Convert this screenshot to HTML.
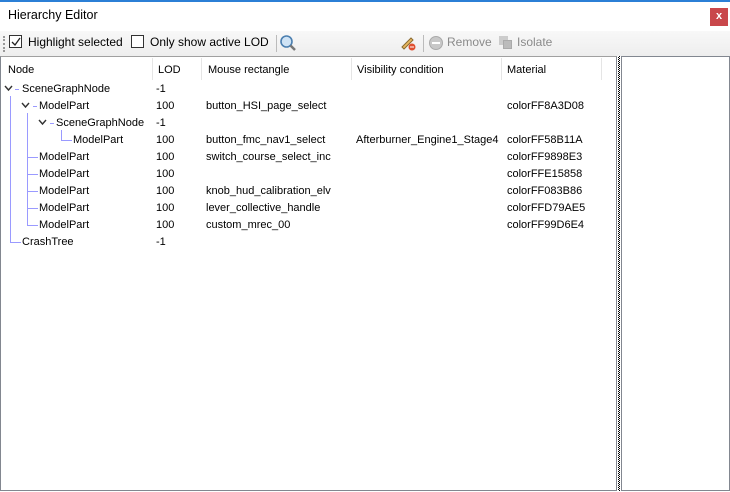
<!DOCTYPE html>
<html><head><style>
*{margin:0;padding:0;box-sizing:border-box}
body{width:730px;height:491px;background:#fff;font-family:"Liberation Sans",sans-serif;font-size:11px;color:#000;position:relative;overflow:hidden}
.a{position:absolute;white-space:nowrap}
.r{position:absolute;left:0;top:0;width:730px;height:491px;transform:translateY(1px)}
.tl{position:absolute;background:#9a9aff}
</style></head><body>
<div class="a" style="left:0;top:0;width:730px;height:2px;background:#2b7fd6"></div>
<div class="a" style="left:8px;top:8px;font-size:12.5px">Hierarchy Editor</div>
<div class="a" style="left:710px;top:8px;width:18px;height:18px;background:#c9474b;color:#fff;font-size:11px;font-weight:bold;text-align:center;line-height:17px">x</div>
<div class="a" style="left:0;top:31px;width:730px;height:25px;background:linear-gradient(#f8f8f8,#eeeeee)"></div>
<div class="a" style="left:3px;top:36px;width:2px;height:16px;border-left:2px dotted #999"></div>
<div class="a" style="left:9px;top:35px;width:13px;height:13px;border:1px solid #333;background:#fff"></div>
<svg class="a" style="left:10px;top:36px" width="12" height="12"><path d="M2 6 L5 9 L10 2" stroke="#222" fill="none" stroke-width="1.3"/></svg>
<div class="a" style="left:28px;top:35px;font-size:12px">Highlight selected</div>
<div class="a" style="left:131px;top:35px;width:13px;height:13px;border:1px solid #333;background:#fff"></div>
<div class="a" style="left:150px;top:35px;font-size:12px">Only show active LOD</div>
<div class="a" style="left:276px;top:35px;width:1px;height:17px;background:#bbb"></div>
<svg class="a" style="left:279px;top:34px" width="18" height="18"><circle cx="7.5" cy="7.5" r="5.5" fill="#cfe3f5" stroke="#4b7fb0" stroke-width="1.6"/><path d="M11.5 11.5 L16 16" stroke="#777" stroke-width="2.5"/></svg>
<svg class="a" style="left:400px;top:35px" width="16" height="16"><path d="M2 12 L11 3 L13 5 L4 14 Z" fill="#e8b860" stroke="#8a6a30"/><circle cx="12" cy="12" r="3.5" fill="#e05030"/><path d="M10 12h4" stroke="#fff"/></svg>
<div class="a" style="left:423px;top:35px;width:1px;height:17px;background:#bbb"></div>
<div class="a" style="left:429px;top:36px;width:14px;height:14px;border-radius:50%;background:#c8c8c8;border:1px solid #aaa"></div>
<div class="a" style="left:432px;top:42px;width:8px;height:2px;background:#fff"></div>
<div class="a" style="left:447px;top:35px;font-size:12px;color:#8a8a8a">Remove</div>
<div class="a" style="left:499px;top:36px;width:9px;height:9px;background:#ccc"></div>
<div class="a" style="left:503px;top:40px;width:9px;height:9px;background:#bbb;border:1px solid #aaa"></div>
<div class="a" style="left:517px;top:35px;font-size:12px;color:#8a8a8a">Isolate</div>
<div class="a" style="left:0;top:56px;width:617px;height:435px;border:1px solid #828790;border-top:1px solid #a0a0a0"></div>
<div class="a" style="left:618px;top:56px;width:2px;height:435px;background:repeating-conic-gradient(#000 0 25%,#fff 0 50%) 0 0/2px 2px"></div>
<div class="a" style="left:621px;top:56px;width:109px;height:435px;border:1px solid #828790"></div>
<div class="a" style="left:152px;top:58px;width:1px;height:22px;background:#e5e5e5"></div>
<div class="a" style="left:201px;top:58px;width:1px;height:22px;background:#e5e5e5"></div>
<div class="a" style="left:351px;top:58px;width:1px;height:22px;background:#e5e5e5"></div>
<div class="a" style="left:501px;top:58px;width:1px;height:22px;background:#e5e5e5"></div>
<div class="a" style="left:601px;top:58px;width:1px;height:22px;background:#e5e5e5"></div>
<div class="r">
<div class="a" style="left:8px;top:63px">Node</div>
<div class="a" style="left:158px;top:63px">LOD</div>
<div class="a" style="left:208px;top:63px">Mouse rectangle</div>
<div class="a" style="left:357px;top:63px">Visibility condition</div>
<div class="a" style="left:507px;top:63px">Material</div>
<div class="tl" style="left:10px;top:95px;width:1px;height:147px"></div>
<div class="tl" style="left:11px;top:241px;width:10px;height:1px"></div>
<div class="tl" style="left:27px;top:112px;width:1px;height:113px"></div>
<div class="tl" style="left:28px;top:156px;width:10px;height:1px"></div>
<div class="tl" style="left:28px;top:173px;width:10px;height:1px"></div>
<div class="tl" style="left:28px;top:190px;width:10px;height:1px"></div>
<div class="tl" style="left:28px;top:207px;width:10px;height:1px"></div>
<div class="tl" style="left:28px;top:224px;width:10px;height:1px"></div>
<div class="tl" style="left:61px;top:129px;width:1px;height:11px"></div>
<div class="tl" style="left:62px;top:139px;width:10px;height:1px"></div>
<div class="tl" style="left:15px;top:88px;width:4px;height:1px"></div>
<div class="tl" style="left:33px;top:105px;width:4px;height:1px"></div>
<div class="tl" style="left:50px;top:122px;width:4px;height:1px"></div>
<svg class="a" style="left:4px;top:84px" width="9" height="7"><path d="M1 1 L4.5 5 L8 1" stroke="#333" fill="none" stroke-width="1.4"/></svg>
<svg class="a" style="left:21px;top:101px" width="9" height="7"><path d="M1 1 L4.5 5 L8 1" stroke="#333" fill="none" stroke-width="1.4"/></svg>
<svg class="a" style="left:38px;top:118px" width="9" height="7"><path d="M1 1 L4.5 5 L8 1" stroke="#333" fill="none" stroke-width="1.4"/></svg>
<div class="a" style="left:22px;top:82px">SceneGraphNode</div><div class="a" style="left:156px;top:82px">-1</div>
<div class="a" style="left:39px;top:99px">ModelPart</div><div class="a" style="left:156px;top:99px">100</div><div class="a" style="left:206px;top:99px">button_HSI_page_select</div><div class="a" style="left:507px;top:99px">colorFF8A3D08</div>
<div class="a" style="left:56px;top:116px">SceneGraphNode</div><div class="a" style="left:156px;top:116px">-1</div>
<div class="a" style="left:73px;top:133px">ModelPart</div><div class="a" style="left:156px;top:133px">100</div><div class="a" style="left:206px;top:133px">button_fmc_nav1_select</div><div class="a" style="left:356px;top:133px">Afterburner_Engine1_Stage4</div><div class="a" style="left:507px;top:133px">colorFF58B11A</div>
<div class="a" style="left:39px;top:150px">ModelPart</div><div class="a" style="left:156px;top:150px">100</div><div class="a" style="left:206px;top:150px">switch_course_select_inc</div><div class="a" style="left:507px;top:150px">colorFF9898E3</div>
<div class="a" style="left:39px;top:167px">ModelPart</div><div class="a" style="left:156px;top:167px">100</div><div class="a" style="left:507px;top:167px">colorFFE15858</div>
<div class="a" style="left:39px;top:184px">ModelPart</div><div class="a" style="left:156px;top:184px">100</div><div class="a" style="left:206px;top:184px">knob_hud_calibration_elv</div><div class="a" style="left:507px;top:184px">colorFF083B86</div>
<div class="a" style="left:39px;top:201px">ModelPart</div><div class="a" style="left:156px;top:201px">100</div><div class="a" style="left:206px;top:201px">lever_collective_handle</div><div class="a" style="left:507px;top:201px">colorFFD79AE5</div>
<div class="a" style="left:39px;top:218px">ModelPart</div><div class="a" style="left:156px;top:218px">100</div><div class="a" style="left:206px;top:218px">custom_mrec_00</div><div class="a" style="left:507px;top:218px">colorFF99D6E4</div>
<div class="a" style="left:22px;top:235px">CrashTree</div><div class="a" style="left:156px;top:235px">-1</div>
</div>
</body></html>
